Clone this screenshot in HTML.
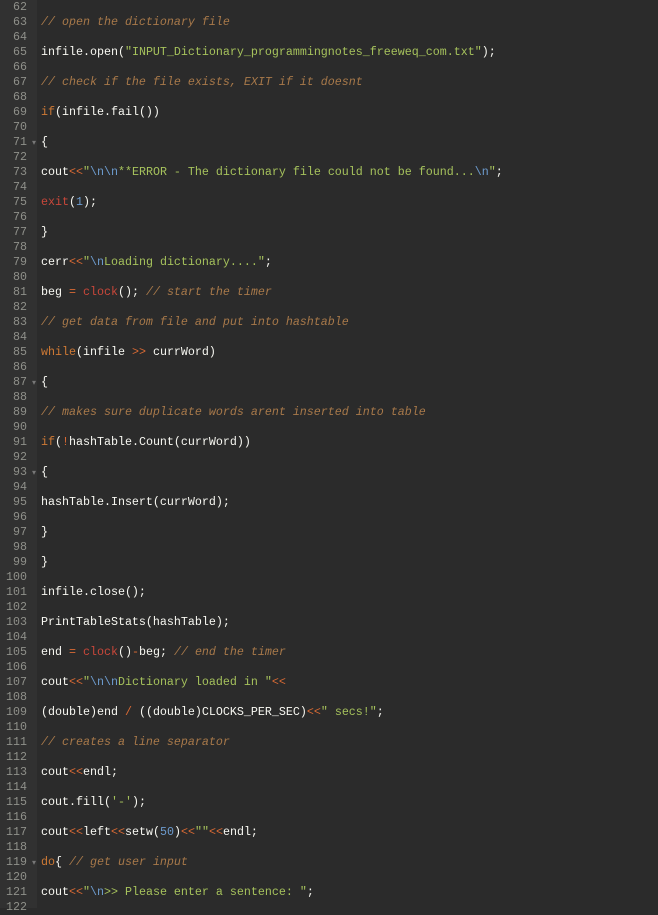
<!DOCTYPE html><html><head><style>
body{margin:0;background:#2b2b2b;width:658px;height:908px;overflow:hidden;font-family:"Liberation Mono",monospace;font-size:11.67px}
.g{position:absolute;left:0;top:0;width:37px;height:908px;background:#313131}
.l{position:absolute;left:0;height:15px;line-height:15px;white-space:pre;color:#f8f8f2}
.n{display:inline-block;width:27px;text-align:right;color:#8f908a}
.f{display:inline-block;width:14px;color:#777;font-size:8px;text-align:center}
.c{color:#a8794a;font-style:italic}.s{color:#a6c25c}.k{color:#cf7a35}.o{color:#d96a34}.r{color:#c8473a}.b{color:#6d9ccf}
</style></head><body><div class="g"></div>
<div id="x"></div>
<script>
var L=[
'','<span class="c">// open the dictionary file</span>','',
'infile.open(<span class="s">"INPUT_Dictionary_programmingnotes_freeweq_com.txt"</span>);','',
'<span class="c">// check if the file exists, EXIT if it doesnt</span>','',
'<span class="k">if</span>(infile.fail())','','{','',
'cout<span class="o">&lt;&lt;</span><span class="s">"<span class="b">\\n\\n</span>**ERROR - The dictionary file could not be found...<span class="b">\\n</span>"</span>;','',
'<span class="r">exit</span>(<span class="b">1</span>);','','}','',
'cerr<span class="o">&lt;&lt;</span><span class="s">"<span class="b">\\n</span>Loading dictionary...."</span>;','',
'beg <span class="o">=</span> <span class="r">clock</span>(); <span class="c">// start the timer</span>','',
'<span class="c">// get data from file and put into hashtable</span>','',
'<span class="k">while</span>(infile <span class="o">&gt;&gt;</span> currWord)','','{','',
'<span class="c">// makes sure duplicate words arent inserted into table</span>','',
'<span class="k">if</span>(<span class="o">!</span>hashTable.Count(currWord))','','{','',
'hashTable.Insert(currWord);','','}','','}','',
'infile.close();','','PrintTableStats(hashTable);','',
'end <span class="o">=</span> <span class="r">clock</span>()<span class="o">-</span>beg; <span class="c">// end the timer</span>','',
'cout<span class="o">&lt;&lt;</span><span class="s">"<span class="b">\\n\\n</span>Dictionary loaded in "</span><span class="o">&lt;&lt;</span>','',
'(double)end <span class="o">/</span> ((double)CLOCKS_PER_SEC)<span class="o">&lt;&lt;</span><span class="s">" secs!"</span>;','',
'<span class="c">// creates a line separator</span>','',
'cout<span class="o">&lt;&lt;</span>endl;','',
'cout.fill(<span class="s">\'-\'</span>);','',
'cout<span class="o">&lt;&lt;</span>left<span class="o">&lt;&lt;</span>setw(<span class="b">50</span>)<span class="o">&lt;&lt;</span><span class="s">""</span><span class="o">&lt;&lt;</span>endl;','',
'<span class="k">do</span>{ <span class="c">// get user input</span>','',
'cout<span class="o">&lt;&lt;</span><span class="s">"<span class="b">\\n</span>&gt;&gt; Please enter a sentence: "</span>;',''];
var fold={71:1,87:1,93:1,119:1};var h='';
for(var i=0;i<L.length;i++){var n=62+i;h+='<div class="l" style="top:'+(i*15)+'px"><span class="n">'+n+'</span><span class="f">'+(fold[n]?'▾':'')+'</span>'+L[i]+'</div>';}
document.getElementById('x').innerHTML=h;
</script></body></html>
